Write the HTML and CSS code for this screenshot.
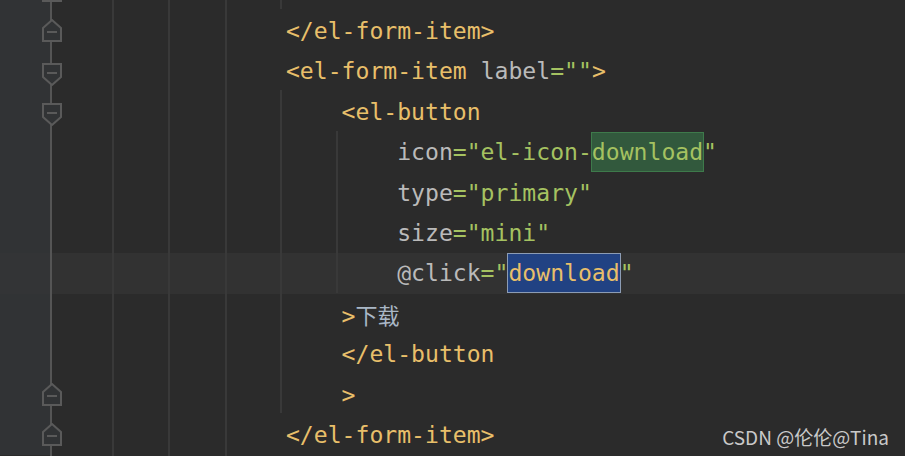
FILE: index.html
```html
<!DOCTYPE html>
<html lang="en">

<head>
    <meta charset="UTF-8">
    <meta name="viewport" content="width=device-width, initial-scale=1.0">
    <title>el-form-item</title>
    <link rel="stylesheet" href="styles.css">
</head>

<body>
    <div class="editor">
        <!-- fold line and indent guides drawn over the rows -->
        <div class="fold-line"></div>
        <div class="guide g1"></div>
        <div class="guide g2"></div>
        <div class="guide g3"></div>
        <div class="guide g4a"></div>
        <div class="guide g4b"></div>
        <div class="guide g5"></div>

        <div class="lines">
            <div class="row">
                <div class="gutter"><svg class="fold" viewBox="0 0 20 24"><path d="M1 9 L10 1 L19 9 L19 22 L1 22 Z" /><line x1="5" y1="13" x2="15" y2="13" /></svg></div>
                <div class="code"></div>
            </div>
            <div class="row">
                <div class="gutter"><svg class="fold" viewBox="0 0 20 24"><path d="M1 9 L10 1 L19 9 L19 22 L1 22 Z" /><line x1="5" y1="13" x2="15" y2="13" /></svg></div>
                <div class="code">                <span class="tag">&lt;/el-form-item&gt;</span></div>
            </div>
            <div class="row">
                <div class="gutter"><svg class="fold down" viewBox="0 0 20 24"><path d="M1 2 L19 2 L19 15 L10 23 L1 15 Z" /><line x1="5" y1="11" x2="15" y2="11" /></svg></div>
                <div class="code">                <span class="tag">&lt;el-form-item</span> <span class="attr">label</span><span class="val">=""</span><span class="tag">&gt;</span></div>
            </div>
            <div class="row">
                <div class="gutter"><svg class="fold down" viewBox="0 0 20 24"><path d="M1 2 L19 2 L19 15 L10 23 L1 15 Z" /><line x1="5" y1="11" x2="15" y2="11" /></svg></div>
                <div class="code">                    <span class="tag">&lt;el-button</span></div>
            </div>
            <div class="row">
                <div class="gutter"></div>
                <div class="code">                        <span class="attr">icon</span><span class="val">="el-icon-<span class="found">download</span>"</span></div>
            </div>
            <div class="row">
                <div class="gutter"></div>
                <div class="code">                        <span class="attr">type</span><span class="val">="primary"</span></div>
            </div>
            <div class="row">
                <div class="gutter"></div>
                <div class="code">                        <span class="attr">size</span><span class="val">="mini"</span></div>
            </div>
            <div class="row current">
                <div class="gutter"></div>
                <div class="code">                        <span class="attr">@click</span><span class="val">="<span class="selected">download</span>"</span></div>
            </div>
            <div class="row">
                <div class="gutter"></div>
                <div class="code">                    <span class="tag">&gt;</span><span class="text">下载</span></div>
            </div>
            <div class="row">
                <div class="gutter"></div>
                <div class="code">                    <span class="tag">&lt;/el-button</span></div>
            </div>
            <div class="row">
                <div class="gutter"><svg class="fold" viewBox="0 0 20 24"><path d="M1 9 L10 1 L19 9 L19 22 L1 22 Z" /><line x1="5" y1="13" x2="15" y2="13" /></svg></div>
                <div class="code">                    <span class="tag">&gt;</span></div>
            </div>
            <div class="row">
                <div class="gutter"><svg class="fold" viewBox="0 0 20 24"><path d="M1 9 L10 1 L19 9 L19 22 L1 22 Z" /><line x1="5" y1="13" x2="15" y2="13" /></svg></div>
                <div class="code">                <span class="tag">&lt;/el-form-item&gt;</span></div>
            </div>
        </div>

        <div class="watermark">CSDN @伦伦@Tina</div>
    </div>
</body>

</html>
```

FILE: styles.css
```css
* {
    margin: 0;
    padding: 0;
    box-sizing: border-box;
}

body {
    background-color: #2b2b2b;
    overflow: hidden;
}

.editor {
    position: relative;
    width: 905px;
    height: 456px;
    overflow: hidden;
    background-color: #2b2b2b;
}

.lines {
    margin-top: -29.4px;
}

.row {
    display: flex;
    height: 40.4px;
}

.gutter {
    width: 52px;
    flex-shrink: 0;
    background-color: #313335;
    display: flex;
    align-items: center;
    justify-content: flex-end;
}

.code {
    flex: 1;
    padding-left: 11.5px;
    white-space: pre;
    font-family: "DejaVu Sans Mono", "Noto Sans CJK SC", monospace;
    font-size: 23.1px;
    line-height: 40.4px;
    color: #a9b7c6;
    position: relative;
    z-index: 1;
}

.row.current {
    background-color: #323232;
}

.row.current .gutter {
    background-color: #333436;
}

/* fold markers */

.fold {
    width: 20px;
    height: 24px;
    margin-right: -10px;
    position: relative;
    z-index: 4;
}

.fold path {
    fill: #313335;
    stroke: #5a5a5a;
    stroke-width: 2;
}

.fold line {
    stroke: #5a5a5a;
    stroke-width: 2;
}

.fold.down {
    margin-top: 4px;
}

.fold-line {
    position: absolute;
    left: 50px;
    top: 0;
    width: 2px;
    height: 100%;
    background-color: #555555;
    z-index: 3;
}

/* indent guides */

.guide {
    position: absolute;
    width: 2px;
    background-color: #393939;
    z-index: 0;
}

.g1 {
    left: 112px;
    top: 0;
    height: 456px;
}

.g2 {
    left: 168px;
    top: 0;
    height: 456px;
}

.g3 {
    left: 225px;
    top: 0;
    height: 456px;
}

.g4a {
    left: 280px;
    top: 0;
    height: 9px;
}

.g4b {
    left: 280px;
    top: 90px;
    height: 323px;
}

.g5 {
    left: 336px;
    top: 131px;
    height: 162px;
}

/* syntax colours */

.tag {
    color: #e8bf6a;
}

.attr {
    color: #bababa;
}

.val {
    color: #a5c261;
}

.text {
    color: #a9b7c6;
    font-family: "Noto Sans CJK SC", sans-serif;
    font-size: 22px;
}

.found {
    display: inline-block;
    height: 40px;
    vertical-align: top;
    line-height: 38px;
    background-color: #32593d;
    border: 1px solid #3e7a4b;
    margin: 0 -1px;
}

.selected {
    display: inline-block;
    height: 40px;
    vertical-align: top;
    line-height: 38px;
    color: #e8bf6a;
    background-color: #214283;
    border: 1px solid #8c9cb4;
    margin: 0 -1px;
}

.watermark {
    position: absolute;
    right: 16px;
    bottom: 6px;
    font-family: "Noto Sans CJK SC", sans-serif;
    font-size: 19px;
    color: #c9c9c9;
    z-index: 5;
}
```
